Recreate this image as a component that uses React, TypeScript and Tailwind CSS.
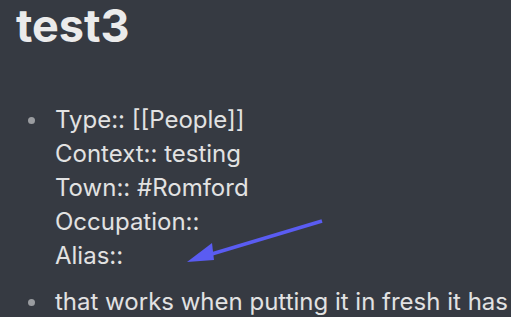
import React from "react";

const lines1 = ["Type:: [[People]]", "Context:: testing", "Town:: #Romford", "Occupation::", "Alias::"];

function Bullet() {
  return (
    <div className="w-[31px] h-[34px] flex items-center shrink-0">
      <span className="block w-[7px] h-[7px] rounded-full bg-[#9a9ca0] ml-[4px]" />
    </div>
  );
}

export default function App() {
  return (
    <div
      className="relative w-[511px] h-[317px] overflow-hidden bg-[#363a42] text-[#e2e2e2]"
      style={{ fontFamily: "Inter, 'Noto Sans', sans-serif" }}
    >
      <div className="pl-[16px] pt-[4px]">
        <h1 className="text-[45px] leading-[44px] font-bold text-[#ebebeb]">test3</h1>
      </div>
      <div className="pt-[55px] pl-[24px]">
        <div className="flex">
          <Bullet />
          <div className="text-[24px] leading-[34px] whitespace-nowrap">
            {lines1.map((l) => (
              <div key={l}>{l}</div>
            ))}
          </div>
        </div>
        <div className="flex mt-[12px]">
          <Bullet />
          <div className="text-[24px] leading-[34px] whitespace-nowrap">
            that works when putting it in fresh it has
          </div>
        </div>
      </div>
      <svg className="absolute left-0 top-0" width="511" height="317" viewBox="0 0 511 317">
        <line x1="322" y1="221" x2="205" y2="256" stroke="#5a5cf2" strokeWidth="3.5" strokeLinecap="butt" />
        <polygon points="187,262 212,243 214,260" fill="#5a5cf2" />
      </svg>
    </div>
  );
}
